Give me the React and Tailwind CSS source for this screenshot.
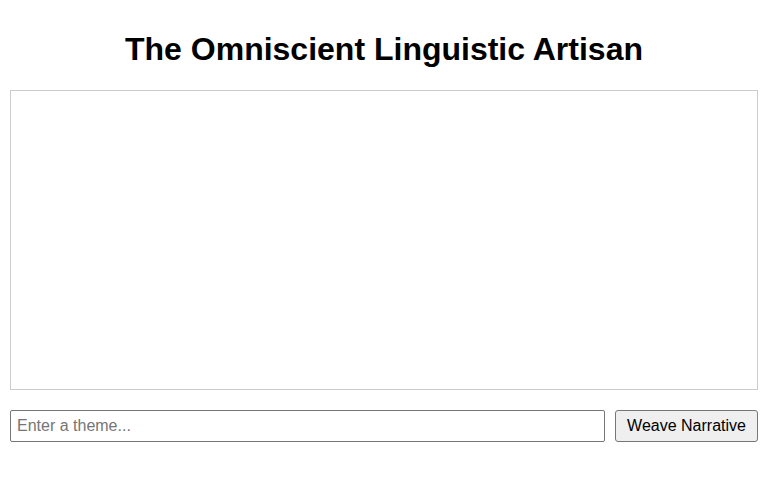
import React, { useState } from 'react';

export default function App() {
  const [theme, setTheme] = useState('');

  return (
    <div className="p-[10px] font-['Liberation_Sans',Arial,sans-serif] text-black bg-white">
      <h1 className="text-[32px] leading-[37px] font-bold text-center my-[21.44px]">
        The Omniscient Linguistic Artisan
      </h1>
      <div className="h-[300px] border border-[#ccc] overflow-y-auto p-[10px]"></div>
      <div className="flex gap-[10px] mt-[20px]">
        <input
          type="text"
          value={theme}
          onChange={(e) => setTheme(e.target.value)}
          placeholder="Enter a theme..."
          className="flex-1 h-[32px] border border-[#767676] rounded-[2px] px-[6px] text-[16px] placeholder:text-[#757575] outline-none"
        />
        <button
          type="button"
          className="h-[32px] w-[143px] border border-[#767676] rounded-[3px] bg-[#efefef] text-[16px] text-black"
        >
          Weave Narrative
        </button>
      </div>
    </div>
  );
}
